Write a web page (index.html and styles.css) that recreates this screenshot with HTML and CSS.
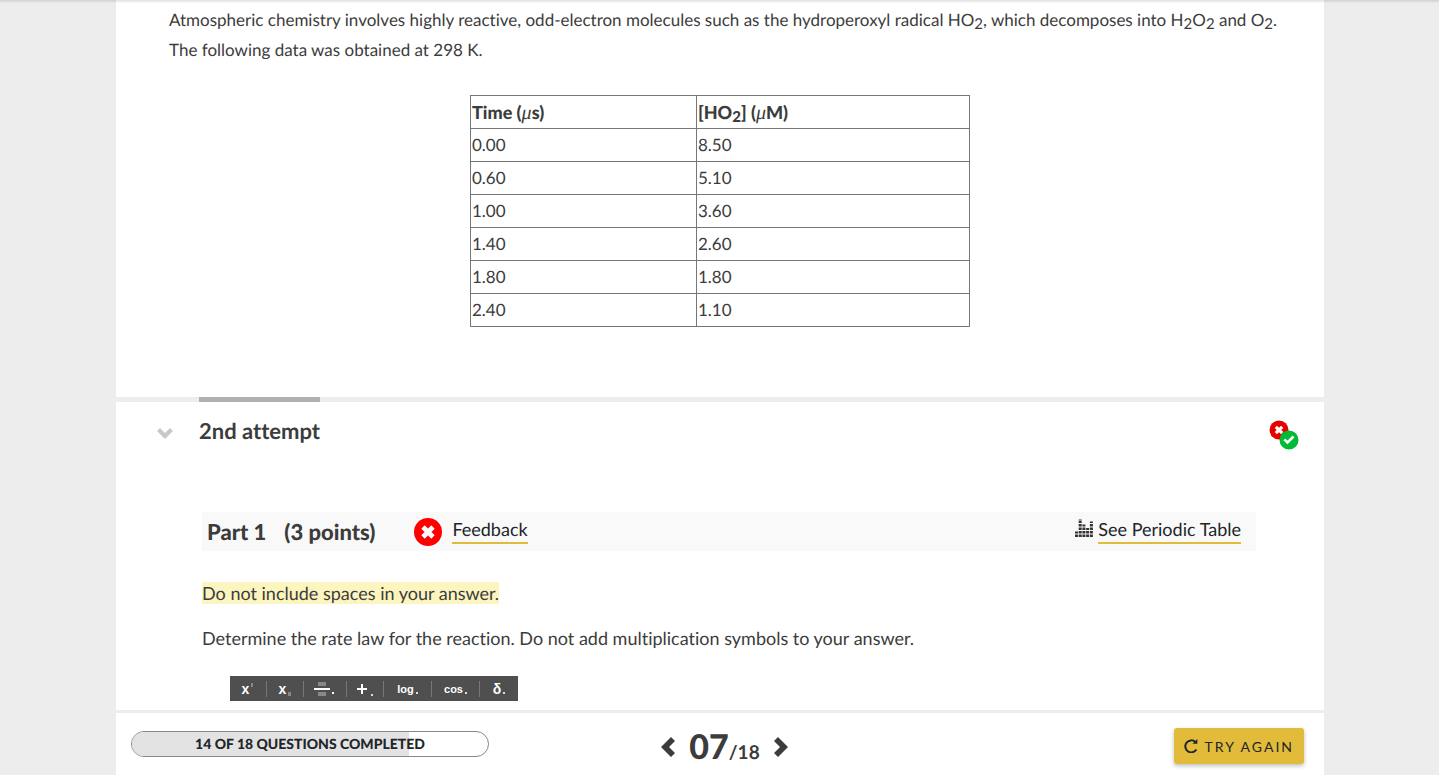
FILE: index.html
```html
<!DOCTYPE html>
<html lang="en">

<head>
  <meta charset="UTF-8">
  <meta name="viewport" content="width=device-width, initial-scale=1.0">
  <title>Question 07</title>
  <link rel="stylesheet" href="styles.css">
</head>

<body>
  <div class="topShadow"></div>
  <div class="page">
    <main class="content">
      <section class="question">
        <p>Atmospheric chemistry involves highly reactive, odd-electron molecules such as the hydroperoxyl radical HO<sub>2</sub>, which decomposes into H<sub>2</sub>O<sub>2</sub> and O<sub>2</sub>. The following data was obtained at 298 K.</p>
        <table class="dataTable">
          <thead>
            <tr>
              <th class="timeCol">Time (<i>μ</i>s)</th>
              <th>[HO<sub>2</sub>] (<i>μ</i>M)</th>
            </tr>
          </thead>
          <tbody>
            <tr><td>0.00</td><td>8.50</td></tr>
            <tr><td>0.60</td><td>5.10</td></tr>
            <tr><td>1.00</td><td>3.60</td></tr>
            <tr><td>1.40</td><td>2.60</td></tr>
            <tr><td>1.80</td><td>1.80</td></tr>
            <tr><td>2.40</td><td>1.10</td></tr>
          </tbody>
        </table>
      </section>

      <section class="attempt">
        <div class="attemptHead">
          <button type="button" class="toggle" aria-label="Collapse attempt">
            <svg width="16" height="11" viewBox="0 0 16 11"><path d="M0 3 L3 0 L8 5 L13 0 L16 3 L8 11 Z" fill="#c8c8c8"/></svg>
          </button>
          <h2>2nd attempt</h2>
          <svg class="status" width="30" height="30" viewBox="0 0 30 30">
            <circle cx="10" cy="10" r="9.5" fill="#e60000"/>
            <path d="M6.8 6.8 L13.2 13.2 M13.2 6.8 L6.8 13.2" stroke="#fff" stroke-width="3.2"/>
            <circle cx="20" cy="20" r="9.5" fill="#0b3"/>
            <path d="M15.3 19.3 L18.5 22.5 L24.5 16.5" fill="none" stroke="#fff" stroke-width="2.6"/>
          </svg>
        </div>

        <div class="part">
          <div class="partHead">
            <h3>Part 1</h3>
            <h3 class="points">(3 points)</h3>
            <svg class="wrong" width="28" height="28" viewBox="0 0 28 28">
              <circle cx="14" cy="14" r="14" fill="#f00"/>
              <path d="M9 9 L19 19 M19 9 L9 19" stroke="#f9f9f9" stroke-width="4.8"/>
            </svg>
            <a href="#" class="link">Feedback</a>
            <div class="periodic">
              <svg width="18" height="18" viewBox="0 0 18 18" fill="none" stroke="#333" stroke-width="3" stroke-dasharray="2.5 1">
                <path d="M1.5 18V12.5M5.2 18V0M8.9 18V5.5M12.6 18V9M16.4 18V2.5"/>
              </svg>
              <a href="#" class="link">See Periodic Table</a>
            </div>
          </div>
          <p><mark>Do not include spaces in your answer.</mark></p>
          <p>Determine the rate law for the reaction. Do not add multiplication symbols to your answer.</p>
          <div class="mathBar">
            <button type="button" class="w36" aria-label="Superscript"><span class="var">x</span><svg width="3" height="14"><rect y="1" width="2" height="4" fill="#888"/></svg></button>
            <button type="button" class="w36" aria-label="Subscript"><span class="var">x</span><svg width="3" height="14"><rect y="10" width="3" height="4" fill="#888"/></svg></button>
            <button type="button" class="w42" aria-label="Fraction">
              <svg width="22" height="14"><path d="M4 0h8v4h-8zM4 10h8v4h-8z" fill="#888"/><path d="M0 6h16v2h-16zM18 10h2v2h-2z" fill="#fff"/></svg>
            </button>
            <button type="button" class="w36" aria-label="Operators">
              <svg width="16" height="14"><path d="M0 6h10v2h-10zM4 2h2v10h-2z" fill="#fff"/><path d="M14 12h2v2h-2z" fill="#ddd"/></svg>
            </button>
            <button type="button" class="w48"><span>log</span><i class="dot"></i></button>
            <button type="button" class="w48"><span>cos</span><i class="dot"></i></button>
            <button type="button" class="w38"><span class="delta">δ</span><i class="dot"></i></button>
          </div>
        </div>
      </section>
    </main>

    <footer class="footer">
      <div class="progress">
        <div class="bar" style="width: 77.8%"></div>
        <span>14 OF 18 QUESTIONS COMPLETED</span>
      </div>
      <nav class="pager">
        <a href="#" aria-label="Previous question">
          <svg width="14" height="20" viewBox="0 0 14 20"><path d="M10 0 L14 4 L8 10 L14 16 L10 20 L0 10 Z" fill="#3c3c3c"/></svg>
        </a>
        <div class="count"><b>07</b><span>/18</span></div>
        <a href="#" aria-label="Next question">
          <svg width="14" height="20" viewBox="0 0 14 20"><path d="M4 0 L0 4 L6 10 L0 16 L4 20 L14 10 Z" fill="#3c3c3c"/></svg>
        </a>
      </nav>
      <div class="action">
        <button type="button" class="tryAgain">
          <svg width="14" height="14" viewBox="0 0 14 14"><path d="M11.4 3 A6 6 0 1 0 12.4 10.5" fill="none" stroke="#212529" stroke-width="2"/><path d="M8.5 4.8 H13.4 V0 Z" fill="#212529"/></svg>
          TRY AGAIN
        </button>
      </div>
    </footer>
  </div>
</body>

</html>
```
FILE: styles.css
```css
* {
  box-sizing: border-box;
}

body {
  margin: 0;
  background-color: #ededed;
  font-family: Lato, "Liberation Sans", sans-serif;
  font-size: 18px;
  line-height: 30px;
  color: #3c3c3c;
  font-variant-ligatures: none;
  text-rendering: geometricPrecision;
}

p,
h2,
h3 {
  margin: 0;
}

svg {
  display: block;
  flex: none;
}

button {
  border: 0;
  padding: 0;
  background: none;
  font-family: inherit;
  cursor: pointer;
}

sub {
  font-size: 15px;
  line-height: 15px;
  vertical-align: -3px;
}

.topShadow {
  position: relative;
  z-index: 1;
  box-shadow: 0 0 3px 1px rgba(0, 0, 0, 0.2);
}

.page {
  display: flex;
  flex-direction: column;
  height: 100vh;
  margin: 0 115px 0 116px;
  background-color: #fff;
}

.content {
  flex: 1;
  min-height: 0;
  overflow: hidden;
}

.question {
  padding: 5px 40px 70px;
  border-bottom: 5px solid #ededed;
  font-size: 17px;
}

.question p {
  padding-left: 13px;
}

.dataTable {
  width: 500px;
  margin: 30px auto 0;
  border-collapse: collapse;
}

.dataTable th,
.dataTable td {
  height: 33px;
  padding: 0 1px;
  border: 1px solid #777;
  text-align: left;
}

.dataTable th {
  font-size: 18px;
  font-weight: 900;
}

.dataTable i {
  font-family: "Liberation Serif", serif;
  font-size: 20px;
  font-weight: 400;
  line-height: 18px;
}

.timeCol {
  width: 226px;
}

.attemptHead {
  display: flex;
  align-items: flex-start;
  padding: 0 25px 0 41px;
}

.toggle {
  margin: 26px 26px 0 0;
}

.attemptHead h2 {
  margin-top: -5px;
  padding-top: 14px;
  border-top: 5px solid #b0b0b0;
  font-size: 22px;
}

.status {
  margin: 18px 0 0 auto;
}

.part {
  padding: 62px 68px 0 86px;
}

.partHead {
  display: flex;
  align-items: center;
  height: 39px;
  margin-bottom: 27px;
  padding: 0 15px 0 5px;
  background-color: #f9f9f9;
}

.partHead h3 {
  font-size: 22px;
  font-weight: 900;
}

.points {
  margin-left: 18px;
}

.wrong {
  margin: 0 10px 0 39px;
}

.link {
  margin-bottom: 2px;
  padding-bottom: 1px;
  border-bottom: 2px solid #e2bb3a;
  line-height: 24px;
  color: #212529;
  text-decoration: none;
}

.periodic {
  display: flex;
  align-items: center;
  gap: 5px;
  margin-left: auto;
}

.periodic svg {
  margin-bottom: 8px;
}

.part p {
  margin-bottom: 15px;
}

.part mark {
  background-color: #fcf5bf;
  color: inherit;
}

.mathBar {
  display: flex;
  align-items: center;
  width: max-content;
  height: 25px;
  margin: 23px 0 10px 28px;
  background-color: #4f4f4f;
}

.mathBar button {
  display: flex;
  align-items: center;
  justify-content: center;
  gap: 2px;
  height: 16px;
  box-sizing: content-box;
  font: bold 11px/16px "Liberation Sans", sans-serif;
  color: #fff;
}

.mathBar button + button {
  border-left: 1px solid #777;
}

.mathBar .var,
.mathBar .delta {
  font-size: 14px;
}

.w36 {
  width: 36px;
}

.w38 {
  width: 38px;
}

.w42 {
  width: 42px;
}

.w48 {
  width: 47px;
}

.dot {
  width: 2px;
  height: 2px;
  margin-top: 8px;
  background-color: #ddd;
}

.footer {
  display: grid;
  grid-template-columns: 1fr auto 1fr;
  align-items: center;
  height: 65px;
  padding: 0 20px 0 15px;
  border-top: 3px solid #ededed;
}

.progress {
  position: relative;
  width: 358px;
  max-width: 100%;
  height: 26px;
  border: 1px solid #888;
  border-radius: 13px;
  overflow: hidden;
  text-align: center;
  font-size: 14px;
  font-weight: 900;
  line-height: 24px;
  color: #212529;
}

.bar {
  position: absolute;
  top: 0;
  left: 0;
  height: 100%;
  background-color: #e3e3e3;
}

.progress span {
  position: relative;
}

.pager {
  display: flex;
  align-items: center;
  gap: 14px;
  padding: 6px 0 0 14px;
}

.count {
  padding-top: 6px;
  font-size: 19px;
  font-weight: 700;
}

.count b {
  font-size: 34px;
  font-weight: 900;
}

.action {
  display: flex;
  justify-content: flex-end;
  padding-top: 4px;
}

.tryAgain {
  display: flex;
  align-items: center;
  gap: 7px;
  height: 36px;
  padding: 0 10px;
  border-radius: 3px;
  background-color: #e2bb3a;
  box-shadow: 0 2px 4px rgba(0, 0, 0, 0.25);
  font-size: 14px;
  letter-spacing: 2px;
  color: #212529;
}
```
